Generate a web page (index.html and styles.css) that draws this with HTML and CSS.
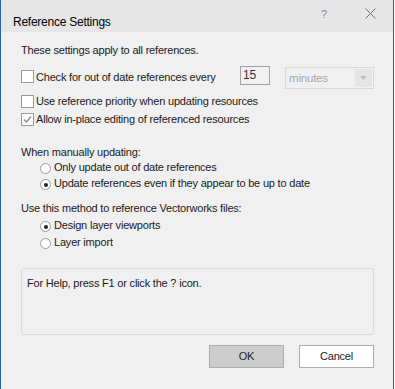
FILE: index.html
```html
<!DOCTYPE html>
<html>
<head>
<meta charset="utf-8">
<link rel="stylesheet" href="styles.css">
</head>
<body>
<div class="window">
  <div class="titlebar">
    <span class="title">Reference Settings</span>
    <span class="help-btn">?</span>
    <svg class="close" width="11" height="11" viewBox="0 0 11 11"><path d="M0.5 0.5 L10.5 10.5 M10.5 0.5 L0.5 10.5" stroke="#6e6e6e" stroke-width="1" fill="none"/></svg>
  </div>
  <div class="content">
    <div class="intro">These settings apply to all references.</div>

    <div class="row row-first">
      <span class="checkbox"></span>
      <span class="label label-fixed">Check for out of date references every</span>
      <span class="numbox">15</span>
      <span class="select"><span class="select-text">minutes</span><span class="select-btn"><svg width="7" height="4" viewBox="0 0 7 4"><path d="M0 0 L7 0 L3.5 4 Z" fill="#bdbdbd"/></svg></span></span>
    </div>
    <div class="row row-check row-second">
      <span class="checkbox"></span>
      <span class="label">Use reference priority when updating resources</span>
    </div>
    <div class="row row-check">
      <span class="checkbox checked"><svg width="11" height="11" viewBox="0 0 11 11"><path d="M2 5.5 L4.5 8 L9 2.5" stroke="#7d8a99" stroke-width="1.2" fill="none"/></svg></span>
      <span class="label">Allow in-place editing of referenced resources</span>
    </div>

    <div class="group-label group-one">When manually updating:</div>
    <div class="row row-radio">
      <span class="radio"></span>
      <span class="label">Only update out of date references</span>
    </div>
    <div class="row row-radio">
      <span class="radio selected"></span>
      <span class="label">Update references even if they appear to be up to date</span>
    </div>

    <div class="group-label group-two">Use this method to reference Vectorworks files:</div>
    <div class="row row-radio row-radio-b row-radio-first">
      <span class="radio selected"></span>
      <span class="label">Design layer viewports</span>
    </div>
    <div class="row row-radio row-radio-b">
      <span class="radio"></span>
      <span class="label">Layer import</span>
    </div>

    <div class="helpbox">For Help, press F1 or click the ? icon.</div>

    <div class="buttons">
      <span class="btn btn-ok">OK</span>
      <span class="btn btn-cancel">Cancel</span>
    </div>
  </div>
</div>
</body>
</html>
```

FILE: styles.css
```css
html, body {
  margin: 0;
  padding: 0;
  background: #ffffff;
}

.window {
  width: 392px;
  height: 389px;
  border-left: 1px solid #2a62aa;
  border-right: 1px solid #2a62aa;
  background: #f0f0f0;
  font-family: "Liberation Sans", Arial, sans-serif;
  font-size: 11px;
  letter-spacing: -0.2px;
  color: #1a1a1a;
  overflow: hidden;
}

.titlebar {
  height: 32px;
  background: #e6e6e6;
  display: flex;
  align-items: flex-start;
}

.title {
  font-size: 12px;
  letter-spacing: -0.25px;
  line-height: 14px;
  padding-top: 15px;
  padding-left: 12px;
  color: #000;
  flex: 1;
}

.help-btn {
  font-size: 11px;
  line-height: 12px;
  color: #8a8a8a;
  margin-top: 8px;
  margin-right: 38px;
}

.close {
  margin-top: 8px;
  margin-right: 17px;
}

.content {
  padding: 0 19px 0 20px;
}

.intro {
  line-height: 13px;
  margin-top: 12px;
}

.row {
  display: flex;
  align-items: flex-start;
  line-height: 13px;
}

.row-first {
  margin-top: 9px;
  height: 23px;
}

.row-first .checkbox {
  margin-top: 4px;
}

.row-first .label {
  margin-top: 5px;
}

.label-fixed {
  width: 204px;
  flex: none;
}

.checkbox {
  width: 11px;
  height: 11px;
  border: 1px solid #9a9a9a;
  background: #ffffff;
  margin-right: 2px;
  flex: none;
  display: flex;
}

.numbox {
  height: 17px;
  border: 1px solid #a3a3a3;
  background: #f0f0f0;
  color: #333;
  font-size: 12px;
  line-height: 17px;
  padding-left: 2px;
  box-sizing: content-box;
  flex: none;
  width: 26px;
}

.select {
  margin-left: 15px;
  margin-top: 1px;
  width: 87px;
  height: 20px;
  border: 1px solid #d9d9d9;
  background: #f0f0f0;
  display: flex;
  flex: none;
}

.select-text {
  flex: 1;
  color: #a6a6a6;
  font-size: 11.5px;
  line-height: 20px;
  padding-left: 3px;
}

.select-btn {
  width: 17px;
  height: 18px;
  margin: 1px;
  background: #e5e5e5;
  display: flex;
  align-items: center;
  justify-content: center;
}

.row-check {
  height: 18px;
}

.row-second {
  margin-top: 3px;
}

.row-check .checkbox {
  margin-top: 3px;
}

.row-check .label {
  margin-top: 3px;
}

.group-label {
  line-height: 13px;
}

.group-one {
  margin-top: 18px;
}

.group-two {
  margin-top: 11px;
}

.row-radio {
  height: 16px;
  padding-left: 19px;
}

.row-radio-b {
  height: 17px;
}

.row-radio-first {
  margin-top: 2px;
}

.row-radio .label {
  margin-top: 2px;
}

.radio {
  width: 9px;
  height: 9px;
  border: 1px solid #9a9a9a;
  border-radius: 50%;
  background: #ffffff;
  margin-top: 4px;
  margin-right: 3px;
  flex: none;
  display: flex;
  align-items: center;
  justify-content: center;
}

.radio.selected::after {
  content: "";
  width: 4px;
  height: 4px;
  border-radius: 50%;
  background: #222;
}

.helpbox {
  margin-top: 17px;
  height: 57px;
  border: 1px solid #dadada;
  border-radius: 3px;
  padding: 8px 5px 0 5px;
  line-height: 13px;
}

.buttons {
  display: flex;
  justify-content: flex-end;
  gap: 15px;
  margin-top: 10px;
}

.btn {
  width: 73px;
  height: 21px;
  border: 1px solid #adadad;
  text-align: center;
  line-height: 21px;
  color: #222;
}

.btn-ok {
  background: #cccccc;
}

.btn-cancel {
  background: #ffffff;
}
```
